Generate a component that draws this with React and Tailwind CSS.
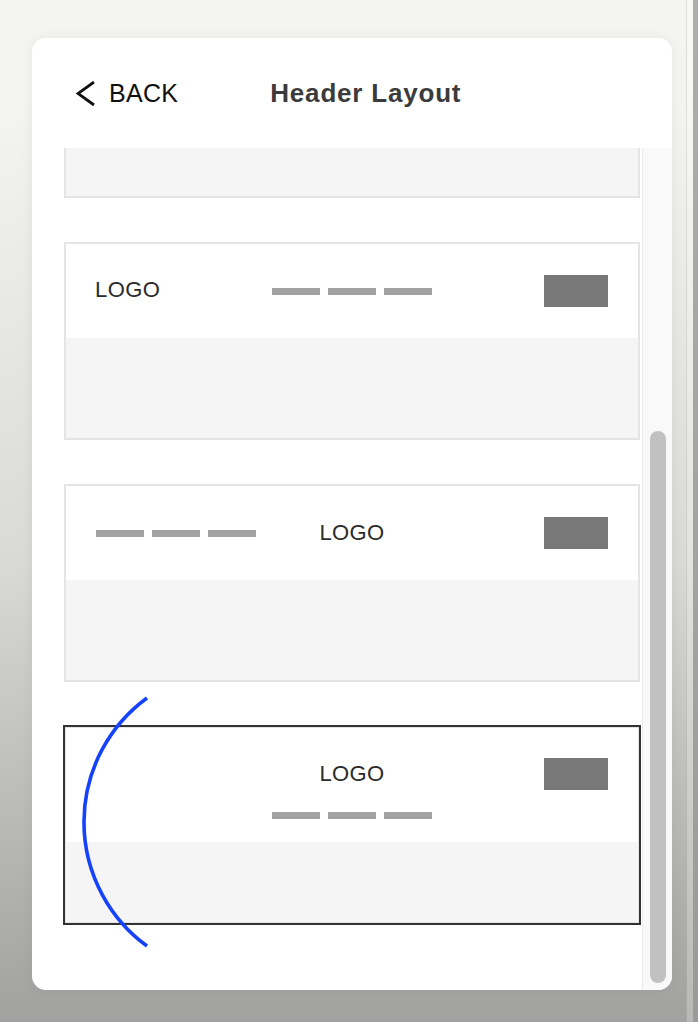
import React from 'react';
import clsx from 'clsx';

const Dashes = () => (
  <div className="flex gap-[8px]">
    <span className="h-[7px] w-[48px] bg-[#a2a2a2]" />
    <span className="h-[7px] w-[48px] bg-[#a2a2a2]" />
    <span className="h-[7px] w-[48px] bg-[#a2a2a2]" />
  </div>
);

const Logo = () => (
  <span className="text-[22px] leading-none tracking-[0.4px] text-[#2b2b2b]">LOGO</span>
);

const Button = () => <span className="h-[32px] w-[64px] bg-[#787878]" />;

const Card = ({ selected, className, children }) => (
  <div
    className={clsx(
      'relative flex h-[198px] shrink-0 flex-col border-2 border-[#e4e4e4] bg-[#f5f5f5]',
      selected && 'outline-2 -outline-offset-1 outline-[#333333]',
      className
    )}
  >
    {children}
  </div>
);

const App = () => {
  return (
    <div
      className="flex h-[1022px] w-full overflow-hidden bg-linear-to-b from-[#f4f4f1] from-10% via-[#d9d9d6] via-55% to-[#a1a19f]"
      style={{ fontFamily: '"Liberation Sans", Arial, sans-serif' }}
    >
      <div className="flex-1">
        <div className="ml-[32px] mt-[38px] flex h-[952px] w-[640px] flex-col overflow-hidden rounded-[14px] bg-white shadow-[0_0_14px_rgba(0,0,0,0.06)]">
          {/* header */}
          <div className="flex h-[110px] shrink-0 items-center pl-[44px]">
            <svg width="20" height="26" viewBox="0 0 20 26" fill="none" className="mt-[1px]">
              <polyline points="18,1 2,12.5 18,24" stroke="#111" strokeWidth="2.8" />
            </svg>
            <span className="ml-[13px] text-[25px] leading-none tracking-[0.3px] text-[#111]">BACK</span>
            <span className="ml-[92px] text-[26px] font-bold leading-none tracking-[0.8px] text-[#3b3b3b]">
              Header Layout
            </span>
          </div>

          {/* scrolled list */}
          <div className="flex min-h-0 flex-1">
            <div className="w-[610px] overflow-hidden pl-[32px] pr-[2px]">
              <div className="flex flex-col gap-[44px]">
                <Card className="-mt-[148px]">
                  <div className="flex h-[94px] items-center justify-end bg-white px-[30px]">
                    <Dashes />
                  </div>
                </Card>

                <Card>
                  <div className="grid h-[94px] grid-cols-[1fr_auto_1fr] items-center bg-white px-[30px]">
                    <span className="-ml-[1px] justify-self-start"><Logo /></span>
                    <Dashes />
                    <span className="flex justify-self-end"><Button /></span>
                  </div>
                </Card>

                <Card>
                  <div className="grid h-[94px] grid-cols-[1fr_auto_1fr] items-center bg-white px-[30px]">
                    <span className="justify-self-start"><Dashes /></span>
                    <Logo />
                    <span className="flex justify-self-end"><Button /></span>
                  </div>
                </Card>

                <Card selected>
                  <div className="flex h-[114px] flex-col items-center bg-white px-[30px] pt-[30px]">
                    <div className="grid h-[32px] w-full grid-cols-[1fr_auto_1fr] items-center">
                      <span />
                      <Logo />
                      <span className="flex justify-self-end"><Button /></span>
                    </div>
                    <div className="mt-[22px]">
                      <Dashes />
                    </div>
                  </div>
                  <svg
                    className="absolute left-[14px] top-[-34px]"
                    width="70"
                    height="256"
                    viewBox="0 0 70 256"
                    fill="none"
                  >
                    <path d="M67 4 A153.5 153.5 0 0 0 67 252" stroke="#1442ff" strokeWidth="3.6" />
                  </svg>
                </Card>
              </div>
            </div>

            {/* scrollbar */}
            <div className="flex w-[30px] flex-col border-l border-[#ebebeb] bg-[#f9f9f9] pb-[7px] pl-[7px] pr-[6px] pt-[283px]">
              <div className="w-[16px] flex-1 rounded-full bg-[#c1c1c1]" />
            </div>
          </div>
        </div>
      </div>

      {/* window edge */}
      <div className="flex w-[12px] shrink-0">
        <div className="w-[7px] border-l border-black/10 bg-white/25" />
        <div className="flex-1 bg-linear-to-b from-[#adadad] to-[#9a9a9a]" />
      </div>
    </div>
  );
};

export default App;
